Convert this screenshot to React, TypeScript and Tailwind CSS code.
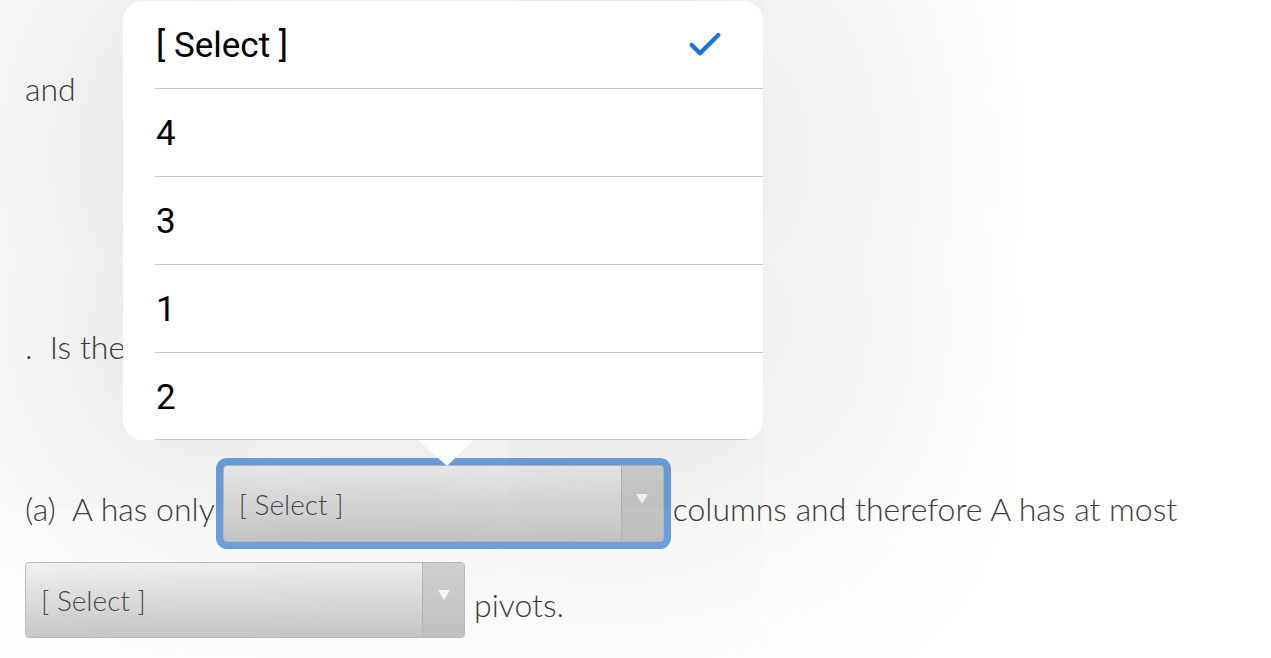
import { Check } from 'lucide-react'

const options = ['[ Select ]', '4', '3', '1', '2']

function SelectBox({ width, height }: { width: number; height: number }) {
  return (
    <div
      className="flex items-stretch rounded-[4px] border border-[#bdbdbd] bg-gradient-to-b from-[#f4f4f4] to-[#c9c9c9]"
      style={{ width, height }}
    >
      <div className="flex flex-1 items-center pl-[15px] text-[28px] font-light text-[#4a4a4a]">
        [ Select ]
      </div>
      <div className="flex w-[42px] items-center justify-center border-l border-[#b9b9b9] bg-gradient-to-b from-[#d6d6d6] to-[#c4c4c4]">
        <svg width="14" height="12" viewBox="0 0 14 12" className="-mt-[10px]">
          <path d="M1 1h12L7 11z" fill="#fdfdfd" />
        </svg>
      </div>
    </div>
  )
}

export default function App() {
  return (
    <div className="relative h-[658px] w-[1271px] overflow-hidden bg-white font-['Lato','Liberation_Sans',sans-serif] text-[#3d3d3d]">
      <div className="flex flex-col pl-[25px] text-[32px] font-light">
        <div className="mt-[67px] h-[44px] leading-[44px]">and</div>
        <div className="mt-[214px] h-[44px] leading-[44px]">.&nbsp; Is the</div>
        <div className="mt-[89px] flex items-center">
          <span className="mt-[11px]">(a)&nbsp; A has only</span>
          <div className="ml-[1px] rounded-[11px] bg-[#6fa4e3] p-[7px]">
            <SelectBox width={441} height={77} />
          </div>
          <span className="ml-[2px] mt-[11px]">columns and therefore A has at most</span>
        </div>
        <div className="mt-[13px] flex items-center">
          <SelectBox width={440} height={76} />
          <span className="ml-[9px] mt-[10px]">pivots.</span>
        </div>
      </div>

      {/* native picker popover */}
      <div className="absolute left-[123px] top-[1px] w-[640px]">
        <div className="overflow-hidden rounded-[20px] bg-white shadow-[0_0_260px_80px_rgba(0,0,0,0.11)] font-['Roboto','Liberation_Sans',sans-serif]">
          {options.map((opt, i) => (
            <div key={opt} className="pl-[32px]">
              <div
                className={`flex items-center justify-between border-b border-[#c9c9c9] pr-[38px] text-[35px] text-black ${i === 4 ? 'h-[87px]' : 'h-[88px]'}`}
              >
                <span className="mt-[4px] ml-[1px]">{opt}</span>
                {i === 0 && <Check className="h-[40px] w-[40px] text-[#1a73e8]" strokeWidth={2.6} />}
              </div>
            </div>
          ))}
        </div>
        <svg width="56" height="26" viewBox="0 0 56 26" className="absolute left-[295px] top-[439px]">
          <path d="M0 0h56L29 26z" fill="#fdfdfd" />
        </svg>
      </div>
    </div>
  )
}
